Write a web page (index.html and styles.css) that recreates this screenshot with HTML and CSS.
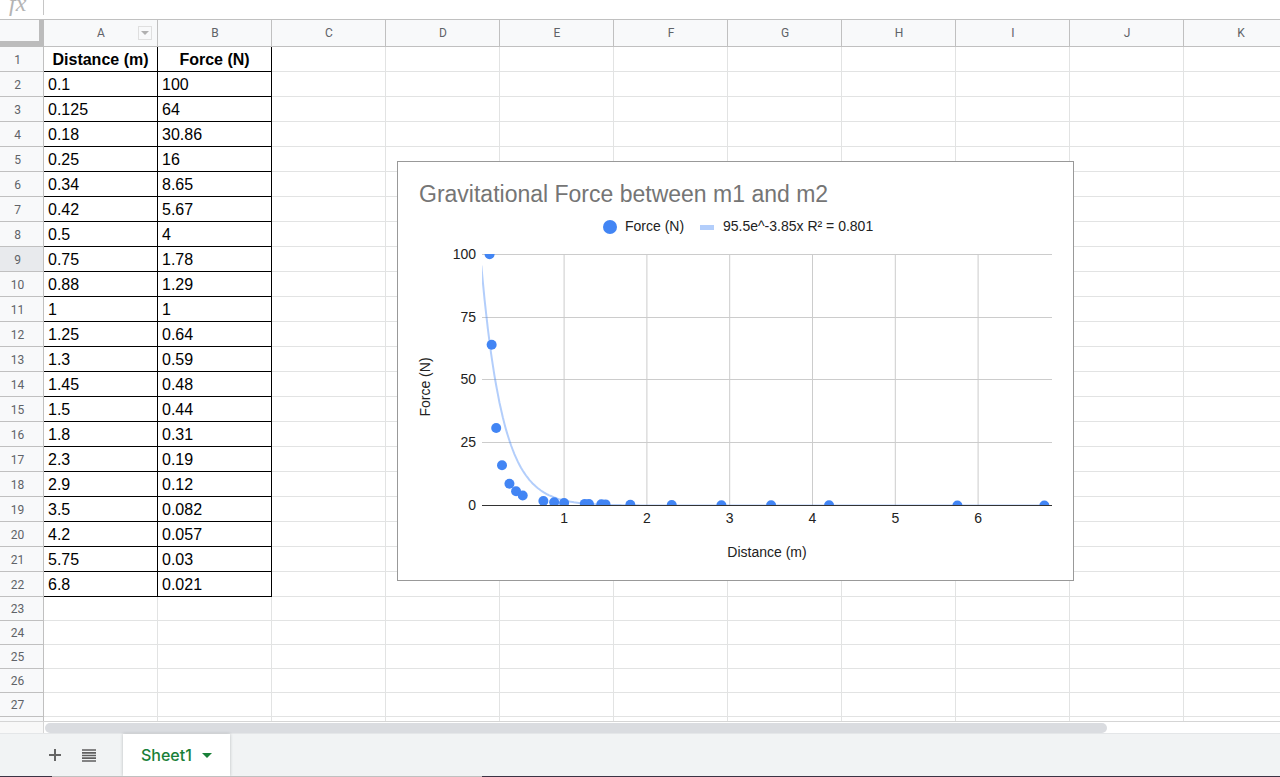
FILE: index.html
```
<!DOCTYPE html>
<html lang="en">
<head>
  <meta charset="UTF-8" />
  <meta name="viewport" content="width=device-width, initial-scale=1.0" />
  <title>Gravitational Force</title>
  <link rel="stylesheet" href="styles.css">
</head>
<body>
  <div class="formula-bar">
    <label class="fx" for="formula">fx</label>
    <input class="formula-input" id="formula" type="text" />
  </div>

  <main class="sheet">
    <table class="grid">
      <thead>
        <tr id="columns"><th class="corner"></th></tr>
      </thead>
      <tbody id="rows"></tbody>
    </table>

    <div class="chart">
      <svg id="chart" class="chart-svg" viewBox="0 0 675 418">
        <defs>
          <clipPath id="plotArea"><rect x="84" y="92" width="570" height="252" /></clipPath>
        </defs>
        <text class="chart-title" x="21" y="40">Gravitational Force between m1 and m2</text>
        <circle class="point" cx="212" cy="65" r="7" />
        <text class="chart-text" x="227" y="69">Force (N)</text>
        <rect class="legend-line" x="302" y="63" width="14" height="5" />
        <text class="chart-text" x="325" y="69">95.5e^-3.85x R² = 0.801</text>
        <g id="gridlines"></g>
        <g id="plot" clip-path="url(#plotArea)"></g>
        <path class="axis" d="M84 343.5H654" />
        <text class="chart-text middle" x="369" y="395">Distance (m)</text>
        <text class="chart-text middle" transform="translate(32 225) rotate(-90)">Force (N)</text>
      </svg>
    </div>
  </main>

  <div class="scrollbar">
    <div class="scroll-corner"></div>
    <div class="track"><div class="thumb"></div></div>
  </div>

  <footer class="tabs">
    <button class="icon-button" type="button" aria-label="Add sheet">
      <svg width="12" height="12" viewBox="0 0 12 12"><path d="M6 0V12M0 6H12" stroke="#666" stroke-width="2" /></svg>
    </button>
    <button class="icon-button" type="button" aria-label="All sheets">
      <svg width="14" height="13" viewBox="0 0 14 13"><path d="M0 1H14M0 3.8H14M0 6.5H14M0 9.2H14M0 12H14" stroke="#5f5f5f" stroke-width="1.7" /></svg>
    </button>
    <button class="tab" type="button">
      Sheet1
      <svg width="10" height="5" viewBox="0 0 10 5"><path d="M0 0H10L5 5Z" fill="#188038" /></svg>
    </button>
  </footer>
  <div class="edge"><div class="edge-light"></div></div>

  <script src="script.js"></script>
</body>
</html>
```
FILE: styles.css
```
* {
  box-sizing: border-box;
}
body {
  margin: 0;
  height: 100vh;
  display: flex;
  flex-direction: column;
  overflow: hidden;
  background: #fff;
  font-family: "Liberation Sans", Arial, sans-serif;
}
button {
  border: 0;
  padding: 0;
  background: none;
  cursor: pointer;
}

/* formula bar */
.formula-bar {
  display: flex;
  flex: none;
  height: 19px;
  overflow: hidden;
  padding-bottom: 4px;
  align-items: flex-end;
}
.fx {
  width: 44px;
  height: 100%;
  display: flex;
  align-items: flex-end;
  padding-left: 9px;
  border-right: 1px solid #c6c6c6;
  font: italic 24px/24px "Liberation Serif", serif;
  color: #b4b4b4;
}
.formula-input {
  flex: 1;
  height: 100%;
  border: 0;
  outline: 0;
}

/* grid */
.sheet {
  position: relative;
  flex: 1;
  min-height: 0;
  overflow: hidden;
  border-top: 1px solid #c0c0c0;
  border-bottom: 1px solid #d5d5d5;
}
.grid {
  table-layout: fixed;
  width: max-content;
  border-collapse: separate;
  border-spacing: 0;
}
.grid th,
.grid td {
  width: 114px;
  height: 24px;
  padding: 0 4px;
  border-right: 1px solid #e2e3e3;
  border-bottom: 1px solid #e2e3e3;
  font-size: 16px;
  line-height: 20px;
  white-space: nowrap;
}
.grid thead th,
.grid .row-head {
  background: #f8f9fa;
  border-color: #c0c0c0;
  color: #5f6368;
  font: 12px/16px Roboto, Arial, sans-serif;
}
.grid thead th {
  height: 27px;
  padding: 0 4px 0 5px;
}
.grid .corner,
.grid .row-head {
  width: 44px;
}
.grid .row-head {
  padding: 0 8px 0 0;
}
.grid .corner {
  border-right: 5px solid #bcbcbc;
  border-bottom: 6px solid #bcbcbc;
}
.grid .active {
  background: #e8eaed;
}
.grid .filled td,
.grid .filled th {
  height: 25px;
  padding-top: 2px;
}
.grid .filled .value {
  border-color: #000;
}
.col-label {
  position: relative;
}
.filter {
  position: absolute;
  right: 1px;
  top: 1px;
  width: 14px;
  height: 14px;
  display: flex;
  align-items: center;
  justify-content: center;
  border: 1px solid #dfdfdf;
}

/* chart */
.chart {
  position: absolute;
  left: 397px;
  top: 141px;
  width: 677px;
  border: 1px solid #999;
  background: #fff;
}
.chart-svg {
  display: block;
  width: 100%;
}
.chart-title {
  font-size: 23px;
  fill: #757575;
}
.chart-text {
  font-size: 14px;
  fill: #222;
}
.middle {
  text-anchor: middle;
}
.end {
  text-anchor: end;
}
.gridline {
  stroke: #ccc;
}
.axis {
  stroke: #333;
}
.point {
  fill: #4285f4;
}
.legend-line {
  fill: #b3cefb;
}
.trend {
  fill: none;
  stroke: #4285f4;
  stroke-opacity: 0.4;
  stroke-width: 2;
}

/* bottom */
.scrollbar {
  display: flex;
  flex: none;
  height: 11px;
}
.scroll-corner {
  width: 44px;
  background: #f8f8f8;
  border-right: 1px solid #d5d5d5;
}
.track {
  flex: 1;
  padding: 1px 0 0 1px;
}
.thumb {
  width: 86%;
  height: 10px;
  border-radius: 5px;
  background: #dadce0;
}
.tabs {
  display: flex;
  flex: none;
  height: 43px;
  padding-left: 38px;
  background: #f1f3f4;
  border-top: 1px solid #e4e6e8;
}
.icon-button {
  width: 34px;
  display: flex;
  align-items: center;
  justify-content: center;
}
.tab {
  display: flex;
  align-items: center;
  gap: 10px;
  margin-left: 17px;
  padding: 0 18px;
  background: #fff;
  box-shadow: 0 0 3px rgba(60, 64, 67, 0.3);
  color: #188038;
  font: 500 16px/20px Inter, sans-serif;
}
.edge {
  flex: none;
  height: 1px;
  padding-left: 52px;
  background: #3c3344;
}
.edge-light {
  width: 35%;
  height: 1px;
  background: #c0c0c0;
}
```
FILE: script.js
```
const data = [
  [0.1, 100], [0.125, 64], [0.18, 30.86], [0.25, 16], [0.34, 8.65],
  [0.42, 5.67], [0.5, 4], [0.75, 1.78], [0.88, 1.29], [1, 1],
  [1.25, 0.64], [1.3, 0.59], [1.45, 0.48], [1.5, 0.44], [1.8, 0.31],
  [2.3, 0.19], [2.9, 0.12], [3.5, 0.082], [4.2, 0.057], [5.75, 0.03],
  [6.8, 0.021],
];
const columns = "ABCDEFGHIJK".split("");
const rowCount = 27;
const activeRow = 9;

// column headers
const filterButton = `<button class="filter" type="button" aria-label="Column menu">
  <svg width="8" height="4" viewBox="0 0 8 4"><path d="M0 0H8L4 4Z" fill="#b0b0b0" /></svg>
</button>`;
document.getElementById("columns").innerHTML += columns
  .map((c) => `<th><div class="col-label">${c}${c === "A" ? filterButton : ""}</div></th>`)
  .join("");

// rows, plus one unnumbered row at the bottom edge
let rows = "";
for (let r = 1; r <= rowCount + 1; r++) {
  const filled = r <= data.length + 1;
  rows += `<tr class="${filled ? "filled" : ""}">`;
  rows += `<th class="row-head ${r === activeRow ? "active" : ""}">${r <= rowCount ? r : ""}</th>`;
  columns.forEach((c, i) => {
    if (r === 1 && i < 2) {
      rows += `<th class="value">${["Distance (m)", "Force (N)"][i]}</th>`;
    } else if (filled && i < 2) {
      rows += `<td class="value">${data[r - 2][i]}</td>`;
    } else {
      rows += "<td></td>";
    }
  });
  rows += "</tr>";
}
document.getElementById("rows").innerHTML = rows;

// chart
const px = (x) => 83.3 + x * 82.8;
const py = (y) => 343.5 - y * 2.512;

let lines = "";
for (let y = 0; y <= 100; y += 25) {
  const top = Math.ceil(py(y)) - 0.5;
  lines += `<path class="gridline" d="M84 ${top}H654" />`;
  lines += `<text class="chart-text end" x="78" y="${top + 4}">${y}</text>`;
}
for (let x = 1; x <= 6; x++) {
  lines += `<path class="gridline" d="M${px(x)} 92V343" />`;
  lines += `<text class="chart-text middle" x="${px(x)}" y="361">${x}</text>`;
}
document.getElementById("gridlines").innerHTML = lines;

let trend = "M";
for (let x = 0; x <= 6.8; x += 0.02) {
  trend += `${px(x).toFixed(1)} ${py(95.5 * Math.exp(-3.85 * x)).toFixed(1)} `;
}
document.getElementById("plot").innerHTML =
  data.map(([x, y]) => `<circle class="point" cx="${px(x)}" cy="${py(y)}" r="5" />`).join("") +
  `<path class="trend" d="${trend}" />`;
```
